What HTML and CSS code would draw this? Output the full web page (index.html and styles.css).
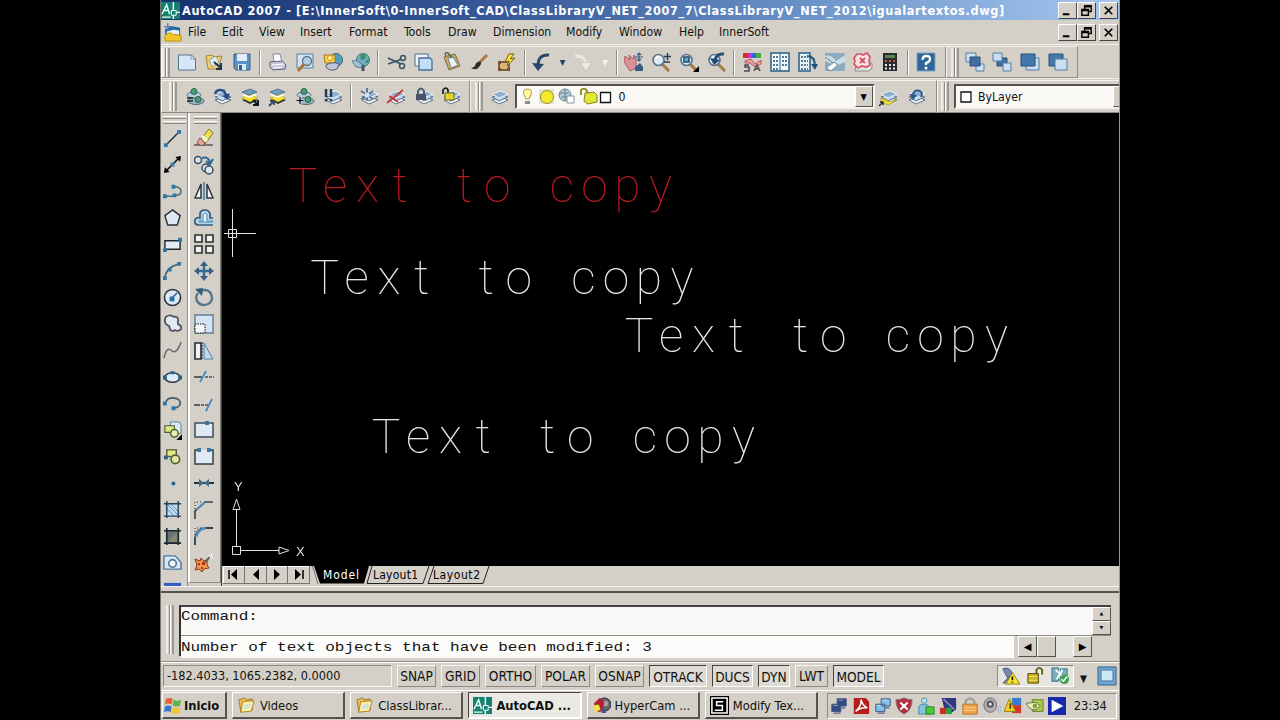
FILE: index.html
```html
<!DOCTYPE html>
<html lang="en">
<head>
<meta charset="utf-8">
<title>AutoCAD 2007</title>
<link rel="stylesheet" href="styles.css">
</head>
<body>
<svg class="defs" width="0" height="0">
  <symbol id="stack" viewBox="0 0 20 20"><path d="M3 13l9-3 7 3-9 4z" fill="#f4f8fb" stroke="#5d7488"/><path d="M3 10l9-3 7 3-9 4z" fill="#bcd4e8" stroke="#5d7488"/><path d="M3 7l9-3 7 3-9 4z" fill="#8fb1cf" stroke="#e9f1f7"/></symbol>
  <symbol id="ystack" viewBox="0 0 20 20"><path d="M2 13l8-3 8 3-8 4z" fill="#1c2b33"/><path d="M2 11l8-3 8 3-8 4z" fill="#f6e22c" stroke="#b19b14" stroke-width=".6"/><path d="M2 5l8-3 7 3-8 3z" fill="#6fa0c4" stroke="#395c7c" stroke-width=".7"/><path d="M3 8l6 2 7-2" fill="none" stroke="#fff" stroke-width="1.5"/></symbol>
  <symbol id="lens" viewBox="0 0 20 20"><path d="M11 12l7 7" stroke="#a27a45" stroke-width="3"/><circle cx="7.500" cy="8" r="5.500" fill="#dcebf5" stroke="#607687" stroke-width="1.700"/><path d="M4.500 7q1-3 4-2" stroke="#fff" fill="none" stroke-width="1.500"/></symbol>
  <symbol id="page" viewBox="0 0 20 20"><path d="M1.500 3h13l4 4v11h-17z" fill="#d6e7f5" stroke="#587590"/><path d="M14 3l4 4h-4z" fill="#f8fcff" stroke="#587590" stroke-width=".7"/></symbol>
  <symbol id="folder" viewBox="0 0 20 20"><path d="M2 4l6-2 2 2 6-1v12L4 17z" fill="#e9bd52" stroke="#9a762a"/><path d="M6 6l12-1-3 11-11 1z" fill="#fff0a6" stroke="#a98530"/><path d="M8 9l7-1-1 5-7 1z" fill="#cfe3d7"/></symbol>
  <symbol id="acad" viewBox="0 0 20 20"><path d="M0 1h20v18H0z" fill="#16806f"/><path d="M1 14L6 4l3 10M3 10h5M13 1v18M10 12h10M1 17h9" stroke="#e9fff9" stroke-width="1.500" fill="none"/><path d="M11 10h5v5h-5z" fill="#16806f" stroke="#fff"/></symbol>
  <symbol id="globes" viewBox="0 0 20 20"><ellipse cx="11" cy="14" rx="8" ry="3.500" fill="#9fb6c8" stroke="#526c80"/><ellipse cx="9" cy="8" rx="7" ry="3" fill="#b8cddd" stroke="#5f7d92"/><circle cx="9" cy="4.500" r="3" fill="#4c9c78" stroke="#28634c"/><circle cx="13" cy="12.500" r="3" fill="#4c9c78" stroke="#28634c"/></symbol>
  <symbol id="pcs" viewBox="0 0 20 20"><path d="M8 2h10v8H8zM2 8h10v8H2z" fill="currentColor" stroke="#3c4c7c"/><path d="M4 18h8M12 12h5" stroke="#76829e" stroke-width="2"/><path d="M9.500 3.500h5M3.500 9.500h5" stroke="#fff" stroke-opacity=".5"/></symbol>
</svg>
<main class="app">
  <header class="title"><svg class="i"><use href="#acad"/></svg><span class="title-text">AutoCAD 2007 - [E:\InnerSoft\0-InnerSoft_CAD\ClassLibraryV_NET_2007_7\ClassLibraryV_NET_2012\igualartextos.dwg]</span>
    <div class="winbtns"><svg viewBox="0 0 18 16"><path d="M4 12h7" stroke="#000" stroke-width="2.200"/></svg><svg viewBox="0 0 18 16"><path d="M7 6V3h7v6h-3M7 4h7M4 7h7v6H4zM4 8h7" fill="none" stroke="#000" stroke-width="1.500"/></svg><svg viewBox="0 0 18 16"><path d="M5 4l8 8M13 4l-8 8" stroke="#000" stroke-width="1.800"/></svg></div>
  </header>
  <nav class="menu"><svg class="i" viewBox="0 0 20 20"><path d="M2 7l5-4 11 2v13H3z" fill="#2367a6"/><path d="M4 9l7-2 6 1v5H4z" fill="#e9f0f7"/><path d="M2 13l5-3 4 2 8 1v6H2z" fill="#f2c529" stroke="#bd8c10"/><path d="M5 0v8M1 4h8" stroke="#6282a8" stroke-width="1.500"/></svg>
    <span class="w35">File</span><span class="w36">Edit</span><span class="w41">View</span><span class="w49">Insert</span><span class="w56">Format</span><span class="w44">Tools</span><span class="w45">Draw</span><span class="w72">Dimension</span><span class="w53">Modify</span><span class="w60">Window</span><span class="w40">Help</span><span>InnerSoft</span>
    <div class="winbtns"><svg viewBox="0 0 18 16"><path d="M4 12h7" stroke="#000" stroke-width="2.200"/></svg><svg viewBox="0 0 18 16"><path d="M7 6V3h7v6h-3M7 4h7M4 7h7v6H4zM4 8h7" fill="none" stroke="#000" stroke-width="1.500"/></svg><svg viewBox="0 0 18 16"><path d="M5 4l8 8M13 4l-8 8" stroke="#000" stroke-width="1.800"/></svg></div>
  </nav>
  <div class="toolrow">
    <section class="bar std"><i class="grip"></i>
      <b><svg><use href="#page"/></svg></b>
      <b><svg viewBox="0 0 20 20"><path d="M2 4l6-1 2 2 8-1-4 13H4z" fill="#efd170" stroke="#a38332"/><path d="M5 8l7-4 3 6-7 5z" fill="#dceaf0" stroke="#738998" stroke-width=".7"/><path d="M10 10l7 6M17 11v6h-5" stroke="#1a3656" stroke-width="2" fill="none"/></svg></b>
      <b><svg viewBox="0 0 20 20"><path d="M2 2h16v16H4l-2-2z" fill="#5c91c3" stroke="#345d87"/><path d="M5 2h10v7H5z" fill="#e2edf7"/><path d="M6 12h8v6H6z" fill="#dbe6ee"/><path d="M7 13h3v5H7z" fill="#345d87"/></svg></b><u class="s8"></u>
      <b><svg viewBox="0 0 20 20"><path d="M5 2h7l2 8H6z" fill="#fff" stroke="#8886a8"/><path d="M2 10l12-1 4 4-1 4-12 1-3-3z" fill="#c8c7dc" stroke="#626184"/><path d="M4 13l12-1M6 16l8-1" stroke="#fff"/></svg></b>
      <b><svg viewBox="0 0 20 20"><path d="M2 2h16v14H2z" fill="#cee2f2" stroke="#587d9c"/><circle cx="12" cy="9" r="4.500" fill="#b1cfe2" stroke="#577285" stroke-width="1.300"/><path d="M9 12l-6 7" stroke="#a8753c" stroke-width="3"/></svg></b>
      <b><svg viewBox="0 0 20 20"><circle cx="13" cy="8" r="6.500" fill="#579ac0" stroke="#416878"/><path d="M1 3h11v8H2z" fill="#f9ce45" stroke="#9f7522"/><circle cx="7" cy="6" r="2.500" fill="#fff49a" stroke="#d99020"/><path d="M3 13q7-4 13-1l-2 5q-7 3-11-2z" fill="#c0c6dc" stroke="#545b78"/></svg></b>
      <b><svg viewBox="0 0 20 20"><circle cx="12" cy="8" r="6.500" fill="#6cadcd" stroke="#387a73"/><path d="M9 3l6-1-1 5-4 1zM14 10l4-4-1 5z" fill="#3e9258"/><path d="M1 9q5-2 9 3l3 1-1 3-7-1z" fill="#9ec1da" stroke="#607a90"/><path d="M12 13v6" stroke="#415463" stroke-width="3"/></svg></b><u class="s8"></u>
      <b><svg viewBox="0 0 20 20"><path d="M1 6l13 6M1 12l14-5" stroke="#3b5369" stroke-width="1.700"/><circle cx="16" cy="6" r="2.500" fill="none" stroke="#3b5369" stroke-width="1.500"/><circle cx="15" cy="14" r="2.500" fill="none" stroke="#3b5369" stroke-width="1.500"/></svg></b>
      <b><svg viewBox="0 0 20 20"><path d="M1 2h13v12H1z" fill="#e8f3fb" stroke="#486e92"/><path d="M5 6h11l2 2v10H5z" fill="#c3dff5" stroke="#486e92" stroke-width="1.300"/></svg></b>
      <b><svg viewBox="0 0 20 20"><path d="M2 5l11-3 5 12-11 4z" fill="#cba866" stroke="#806838"/><path d="M6 6l5-1 5 8-7 3z" fill="#eaf4fa" stroke="#70838b"/><path d="M4 4q-2-4 2-3l4 5" fill="none" stroke="#507044" stroke-width="1.500"/></svg></b>
      <b><svg viewBox="0 0 20 20"><path d="M18 3l-8 8" stroke="#b27546" stroke-width="3"/><path d="M12 10q-5-1-6 4-2 2-4 2 6 4 10-4z" fill="#2c2928"/></svg></b>
      <b><svg viewBox="0 0 20 20"><path d="M2 10h10v8H2z" fill="#dbb775" stroke="#5b422f" stroke-width="1.500"/><path d="M12 2l-4 8 4-1-2 5 8-8-5 1 4-5z" fill="#ffe82a" stroke="#75601c"/><path d="M1 9h3v3H1zM1 16h3v3H1zM10 16h3v3h-3z" fill="#7d4d34"/></svg></b><u class="s7"></u>
      <b><svg viewBox="0 0 20 20"><path d="M18 3Q7 2 7 14" fill="none" stroke="#28466f" stroke-width="3"/><path d="M1 11l6 8 6-7z" fill="#28466f"/></svg></b><em class="drop">▾</em>
      <b><svg viewBox="0 0 20 20" opacity=".7"><path d="M2 4Q13 3 13 14" fill="none" stroke="#f5f4ee" stroke-width="3"/><path d="M7 11l6 8 6-9z" fill="#f8f7f0" stroke="#bab7ae" stroke-width=".7"/></svg></b><em class="drop off">▾</em><u class="s7"></u>
      <b><svg viewBox="0 0 20 20"><path d="M1 4l5 4-1-5 4 4 1-4 2 5v8l-6 3-4-6-2-4z" fill="#d99195" stroke="#a75d68"/><path d="M15 1v8M11 5h8M13 3l2-2 2 2M13 7l2 2 2-2" stroke="#355e83" fill="none" stroke-width="1.200"/><path d="M11 15l5-4 3 4v4h-8z" fill="#365c81"/></svg></b>
      <b><svg viewBox="0 0 20 20"><use href="#lens"/><path d="M16.500 1v7M13 4.500h7M13 10h6" stroke="#253c52" stroke-width="1.500"/></svg></b>
      <b><svg viewBox="0 0 20 20"><use href="#lens"/><path d="M5 5h5v5H5z" fill="#6ba9d2" stroke="#174970" stroke-width="1.500"/><path d="M20 14v6h-6z"/></svg></b>
      <b><svg viewBox="0 0 20 20"><use href="#lens"/><path d="M17 2Q9 1 8 9" fill="none" stroke="#254c76" stroke-width="3"/><path d="M3 6l4 7 6-5z" fill="#254c76"/></svg></b><u class="s8"></u>
      <b><svg viewBox="0 0 20 20"><path d="M1 1h5v5H1z" fill="#d92d2d"/><path d="M6 1h4v5H6z" fill="#c735cb"/><path d="M10 1h4v5h-4z" fill="#2e64df"/><path d="M14 1h5v5h-5z" fill="#41aa48"/><path d="M3 9l6-2 4 5 6-4v4l-6 3-5-4H3z" fill="#ec9fa3" stroke="#b4575d"/><path d="M7 13H3v2h4v4H2M12 19l3-6 3 6M13 17h4" stroke="#4d4a53" fill="none" stroke-width="1.500"/></svg></b>
      <b><svg viewBox="0 0 20 20"><path d="M1 1h18v18H1z" fill="#f1f8fc" stroke="#295d87" stroke-width="1.500"/><path d="M10 1v18" stroke="#295d87"/><path d="M3 5h5M3 9h5M3 13h5M3 17h5M12 5h2M15 5h2M12 9h2M15 9h2M12 13h2M15 13h2" stroke="#255377" stroke-width="1.500" stroke-dasharray="2 1"/></svg></b>
      <b><svg viewBox="0 0 20 20"><path d="M1 1h11v18H1z" fill="#e6f3fa" stroke="#295d87" stroke-width="1.500"/><path d="M3 5h7M3 9h7M3 13h7M3 17h7" stroke="#255377" stroke-width="1.500" stroke-dasharray="2 1"/><path d="M9 4q8 0 8 10" fill="none" stroke="#235379" stroke-width="2"/><path d="M13 12l4 6 3-6z" fill="#235379"/></svg></b>
      <b><svg viewBox="0 0 20 20"><path d="M0 1h20v18H0z" fill="#8dabc0"/><path d="M0 4q6-2 11 5l9-6v7l-9 4-11-5z" fill="#c7dce6"/><path d="M1 16l8-6 4 3-7 6zM0 5l8 6" fill="#f3f8f8" stroke="#6e8897"/></svg></b>
      <b><svg viewBox="0 0 20 20"><path d="M3 11h16v5l-3 3H2z" fill="#e0dfdc" stroke="#8a8a88"/><path d="M4 2h4l2 1 4-2 3 4-1 4 1 4-4 2-4-1-4 2-4-4 1-3-1-3z" fill="#f9dfe0" stroke="#d45460" stroke-width="1.700"/><path d="M7 6l5 5M12 6l-5 5" stroke="#d45460" stroke-width="1.800"/></svg></b>
      <b><svg viewBox="0 0 20 20"><path d="M3 1h14v18H3z" fill="#272b2e"/><path d="M5 3h10v3H5z" fill="#598550"/><path d="M5 9h10" stroke="#db504a" stroke-width="2" stroke-dasharray="2 2"/><path d="M5 13h10M5 16.500h10" stroke="#e7e7e5" stroke-width="2" stroke-dasharray="2 2"/></svg></b><u class="s8"></u>
      <b><svg viewBox="0 0 20 20"><path d="M1 1h18v18H1z" fill="#2d6799" stroke="#79a7c9"/><path d="M6.500 8q0-4 4-4t3.500 3.500Q13.500 10 10 11v2" fill="none" stroke="#fff" stroke-width="2.300"/><circle cx="10" cy="16" r="1.500" fill="#fff"/></svg></b>
    </section>
    <section class="bar order"><i class="grip"></i>
      <b><svg viewBox="0 0 20 20"><path d="M1 1h10v9H1zM11 12h8v7h-8z" fill="#cfe0ee" stroke="#537da2"/><path d="M5 5h10v9H5z" fill="#3f70a2" stroke="#294e75"/></svg></b>
      <b><svg viewBox="0 0 20 20"><path d="M5 6h10v8H5z" fill="#3f70a2" stroke="#294e75"/><path d="M1 1h9v8H1zM11 11h8v8h-8z" fill="#c9dfef" stroke="#537da2"/></svg></b>
      <b><svg viewBox="0 0 20 20"><path d="M6 6h13v12H6z" fill="#c9dfef" stroke="#537da2"/><path d="M1 2h14v12H1z" fill="#4478aa" stroke="#294e75"/></svg></b>
      <b><svg viewBox="0 0 20 20"><path d="M1 2h14v12H1z" fill="#4478aa" stroke="#294e75"/><path d="M7 7h12v11H7z" fill="#c9dfef" stroke="#537da2"/></svg></b>
    </section>
  </div>
  <div class="toolrow second">
    <section class="bar lay"><i class="grip"></i>
      <b><svg viewBox="0 0 20 20"><use href="#globes"/><path d="M2 11h6M2 14h6" stroke="#161f25" stroke-width="1.500"/></svg></b>
      <b><svg viewBox="0 0 20 20"><use href="#stack"/><path d="M3 7q2-6 9-3l3 6" fill="none" stroke="#294e82" stroke-width="2.500"/><path d="M10 9l6 4 2-7z" fill="#294e82"/></svg></b>
      <b><svg viewBox="0 0 20 20"><use href="#ystack"/><path d="M13 13l5 5M18 13v5h-5" stroke="#101820" stroke-width="2" fill="none"/></svg></b>
      <b><svg viewBox="0 0 20 20"><use href="#ystack"/><path d="M1 19l5-5M2 14h4v4" stroke="#344a64" stroke-width="1.800" fill="none"/></svg></b>
      <b><svg viewBox="0 0 20 20"><use href="#globes"/><path d="M5 10v7M1.500 13.500h7" stroke="#fff" stroke-width="3"/><path d="M5 10v7M1.500 13.500h7" stroke="#151b1d" stroke-width="1.400"/></svg></b>
      <b><svg viewBox="0 0 20 20"><use href="#stack"/><path d="M3 2v8M8 2v8" stroke="#263d51" stroke-width="2.500"/><path d="M3 12v2.500M8 12v2.500" stroke="#263d51" stroke-width="2.500"/></svg></b><u class="s8"></u>
      <b><svg viewBox="0 0 20 20"><use href="#stack"/><path d="M8 1v13M2 4l12 8M2 12l12-8" stroke="#65759b" stroke-width="2"/><circle cx="8" cy="8" r="2.500" fill="#d9e3f4"/></svg></b>
      <b><svg viewBox="0 0 20 20"><use href="#stack"/><path d="M1 16L17 3M4 9l8 6" stroke="#c73b39" stroke-width="2"/></svg></b>
      <b><svg viewBox="0 0 20 20"><use href="#stack"/><path d="M4 8V4q3-5 6 0v4" stroke="#56606d" fill="none" stroke-width="2"/><path d="M2 7h10v6H2z" fill="#4b5364"/></svg></b>
      <b><svg viewBox="0 0 20 20"><use href="#stack"/><path d="M2 7V3q3-4 5 0v4" stroke="#1f1e10" fill="none" stroke-width="1.700"/><path d="M4 6h9v7H4z" fill="#e3d72d" stroke="#6d640c"/></svg></b>
    </section>
    <section class="bar layers"><i class="grip"></i>
      <b><svg><use href="#stack"/></svg></b>
      <div class="combo layer-combo"><svg viewBox="518 86 96 20"><path d="M525 94q-2-6 3.500-6t3.500 6l-2 4h-3z" fill="#fff8a0" stroke="#a6964e"/><path d="M526 100h5v3h-5z" fill="#8d8d84"/><path d="M540 88h15v15h-15z" fill="#e3e5c8"/><circle cx="548" cy="96" r="6.500" fill="#f3eb27" stroke="#90904a"/><circle cx="566" cy="94" r="6" fill="#b5cbd3" stroke="#638290"/><path d="M561 92h9M562 96h8M566 88v12" stroke="#678691"/><path d="M568 95h7v7h-7z" fill="#fff" stroke="#8392a0"/><path d="M582 94v-5q4-3 6 1v6" stroke="#919127" stroke-width="2" fill="none"/><path d="M586 92l9-1 3 3v7l-9 2-4-3z" fill="#e2e635" stroke="#7d8225"/><path d="M601.500 91.500h10v10h-10z" fill="#fff" stroke="#111" stroke-width="1.300"/></svg><span>0</span><button class="arrow">▼</button></div>
      <b><svg viewBox="0 0 20 20"><use href="#stack"/><path d="M3 11l9 4 7-3-8 6-8-3z" fill="#f3df38" stroke="#aa981e" stroke-width=".7"/><path d="M1 19l4-4M2 15h3v3" stroke="#26313b" stroke-width="1.500" fill="none"/></svg></b>
      <b><svg viewBox="0 0 20 20"><use href="#stack"/><path d="M7 9q0-7 7-5 3 2 1 6" fill="none" stroke="#2b5787" stroke-width="2"/><path d="M3 7l4 6 4-5z" fill="#2b5787"/></svg></b>
    </section>
    <section class="bar props"><i class="grip"></i>
      <div class="combo color-combo"><svg viewBox="0 0 12 12"><path d="M1 1h10v10H1z" fill="#fff" stroke="#111" stroke-width="1.300"/></svg><span>ByLayer</span><button class="arrow">▼</button></div>
    </section>
  </div>

  <div class="work">
    <aside class="tools"><i class="hgrip"></i>
      <svg viewBox="0 0 20 20"><path d="M3 17L17 3" stroke="#1d3443" stroke-width="1.500"/><path d="M1 15h4v4H1zM15 1h4v4h-4z" fill="#2f79ae"/></svg>
      <svg viewBox="0 0 20 20"><path d="M3 17L17 3" stroke="#1b2328" stroke-width="1.700"/><path d="M1 19l1-6 5 5zM19 1l-1 6-5-5z"/><path d="M8 8h4v4H8z" fill="#347cac"/></svg>
      <svg viewBox="0 0 20 20"><path d="M2 15h10M11 5h3q5 1 5 5t-6 4" fill="none" stroke="#4f6978" stroke-width="1.600"/><path d="M0 13h4v4H0zM10 12h4v4h-4zM9 3h4v4H9z" fill="#2b78ad"/></svg>
      <svg viewBox="0 0 20 20"><path d="M10 2l8 6-3 10H5L2 8z" fill="#dfe9f4" stroke="#28353e" stroke-width="1.600"/></svg>
      <svg viewBox="0 0 20 20"><path d="M2 6h16v9H2z" fill="#e5ecf5" stroke="#20272c" stroke-width="1.500"/><path d="M0 14h4v4H0zM16 3h4v4h-4z" fill="#2b78ad"/></svg>
      <svg viewBox="0 0 20 20"><path d="M2 18Q3 6 18 3" fill="none" stroke="#476477" stroke-width="1.700"/><path d="M0 16h4v4H0zM5 7h4v4H5zM15 1h4v4h-4z" fill="#2b78ad"/></svg>
      <svg viewBox="0 0 20 20"><circle cx="10" cy="10" r="8.500" fill="#dce8f3" stroke="#26323a" stroke-width="1.600"/><path d="M9 11l6-6" stroke="#275f8a" stroke-width="1.500"/><path d="M7 9h5v5H7z" fill="#286fa2"/></svg>
      <svg viewBox="0 0 20 20"><path d="M3 3q5-3 8 0 5-1 5 4-1 2 0 4 4 1 3 5-3 3-6 1-5 2-6-2 0-3-2-3-5-3-2-9z" fill="#e4eaf3" stroke="#49545e" stroke-width="1.800"/></svg>
      <svg viewBox="0 0 20 20"><path d="M1 18Q4 5 9 10t10-9" fill="none" stroke="#656c70" stroke-width="1.600"/></svg>
      <svg viewBox="0 0 20 20"><ellipse cx="10" cy="10" rx="8" ry="5" fill="#e0eaf3" stroke="#2a3c49" stroke-width="1.700"/><path d="M0 8h4v4H0zM8 3.500h4v3H8zM16 8h4v4h-4z" fill="#26628d"/></svg>
      <svg viewBox="0 0 20 20"><path d="M3 9q1-5 8-5 8 1 7 7-2 4-8 4" fill="none" stroke="#49606d" stroke-width="1.800"/><path d="M0 8h4v4H0zM9 13h4v4H9z" fill="#2b78ad"/></svg>
      <svg viewBox="0 0 20 20"><path d="M8 1h9l2 3v9H8z" fill="#dceaf4" stroke="#5f7b90"/><path d="M2 5h10v7H2z" fill="#ddec7f" stroke="#485a36" stroke-width="1.200"/><circle cx="12" cy="13" r="4" fill="#e7f0ab" stroke="#4f633e" stroke-width="1.600"/><path d="M20 14v6h-6z"/></svg>
      <svg viewBox="0 0 20 20"><path d="M4 3h10v7H4z" fill="#e7e884" stroke="#535b33" stroke-width="1.500"/><circle cx="13" cy="13" r="4.500" fill="#dfe8a5" stroke="#52623e" stroke-width="1.700"/><path d="M1 9h4v4H1z" fill="#28618a"/></svg>
      <svg viewBox="0 0 20 20"><circle cx="11" cy="10" r="2" fill="#1e6293"/></svg>
      <svg viewBox="0 0 20 20"><path d="M3 4h14v13H3z" fill="#c3def1"/><path d="M3 8l9 9M4 4l13 13M8 4l9 9" stroke="#548eb9"/><path d="M4 1v18M16 1v18M1 4h18M1 17h18" stroke="#274158" stroke-width="1.500"/></svg>
      <svg viewBox="0 0 20 20"><path d="M3 4h14v13H3z" fill="#6b7475"/><path d="M5 15l11-10v11z" fill="#86876d"/><path d="M4 1v18M16 1v18M1 4h18M1 17h18" stroke="#1c2a32" stroke-width="1.700"/></svg>
      <svg viewBox="0 0 20 20"><path d="M1 3h12l6 7v7H1z" fill="#d7e8f5" stroke="#527896" stroke-width="1.500"/><circle cx="10" cy="11" r="4" fill="#edf6fc" stroke="#527896" stroke-width="1.700"/></svg>
      <svg viewBox="0 0 20 20"><path d="M1 3h18v16H1z" fill="#eff4fc"/><path d="M1 3h18v4H1z" fill="#355ec1"/><path d="M2 9h16" stroke="#547bcd" stroke-width="3" stroke-dasharray="4 2"/></svg>
    </aside>
    <aside class="tools edit"><i class="hgrip"></i>
      <svg viewBox="0 0 20 20"><path d="M0 17h19" stroke="#454545" stroke-width="1.300"/><path d="M6 12L15 1l4 4-8 11z" fill="#efdf4d" stroke="#75702f"/><path d="M6 10l5 5-3 3-5-3z" fill="#e6a4a0" stroke="#7c5451"/><path d="M8 8l5 5" stroke="#eef4f8" stroke-width="3"/></svg>
      <svg viewBox="0 0 20 20"><g fill="#dbe3ed" stroke="#3a4e5c" stroke-width="1.500"><circle cx="4" cy="5" r="3.500"/><circle cx="12" cy="13" r="4"/><circle cx="15" cy="15" r="4"/></g><path d="M8 3q7-2 8 5M12 6l4 3 3-5" stroke="#2e6995" fill="none" stroke-width="2"/></svg>
      <svg viewBox="0 0 20 20"><path d="M7 3v14H1zM13 3v14h6z" fill="#eff3f7" stroke="#2d373e" stroke-width="1.500"/><path d="M10 1v18" stroke="#367db1" stroke-width="1.500"/></svg>
      <svg viewBox="0 0 20 20"><path d="M19 17H4Q0 16 1 12q1-3 5-2V6q0-4 5-4 4 0 5 4v4h3" fill="#b9d7ed" stroke="#365b77" stroke-width="1.700"/><path d="M19 14H5q-1-2 4-1V7q3-4 4 0v6h6" fill="#e5f1fa" stroke="#4387b8"/></svg>
      <svg viewBox="0 0 20 20"><path d="M1 1h7v7H1zM12 1h7v7h-7zM1 12h7v7H1zM12 12h7v7h-7z" fill="#eff1f4" stroke="#2b2e30" stroke-width="1.600"/></svg>
      <svg viewBox="0 0 20 20"><path d="M10 3v14M3 10h14" stroke="#396b91" stroke-width="2.500"/><path d="M10 0l4 5H6zM10 20l4-5H6zM0 10l5-4v8zM20 10l-5-4v8z" fill="#356285"/></svg>
      <svg viewBox="0 0 20 20"><path d="M6 4q8-3 11 3 3 7-3 10-7 3-11-3-2-4 1-8" fill="none" stroke="#53768d" stroke-width="2.300"/><path d="M1 2l8-1-1 8z" fill="#315d7c"/></svg>
      <svg viewBox="0 0 20 20"><path d="M1 1h18v18H1z" fill="#d6e4f1" stroke="#5e7f99" stroke-width="1.400"/><path d="M1 10h10v9H1z" fill="#f7f8fa" stroke="#111" stroke-dasharray="1.500 1"/></svg>
      <svg viewBox="0 0 20 20"><path d="M1 2h6v16H1z" fill="#eef2f6" stroke="#222b31" stroke-width="1.600"/><path d="M10 2l9 16h-9z" fill="#bcd8ef" stroke="#56819f"/><path d="M8 1v18" stroke="#222" stroke-dasharray="2 1"/></svg>
      <svg viewBox="0 0 20 20"><path d="M0 10h8" stroke="#313d44" stroke-width="1.500"/><path d="M11 10h9" stroke="#3a525f" stroke-width="1.500" stroke-dasharray="3 1"/><path d="M6 15l6-11" stroke="#438bc1" stroke-width="1.800"/></svg>
      <svg viewBox="0 0 20 20"><path d="M0 11h6" stroke="#313d44" stroke-width="1.500"/><path d="M7 11h7" stroke="#3a525f" stroke-width="1.500" stroke-dasharray="3 1"/><path d="M12 17l6-12" stroke="#438bc1" stroke-width="1.800"/></svg>
      <svg viewBox="0 0 20 20"><path d="M1 3h18v14H1z" fill="#e0e9f4" stroke="#3c4d59" stroke-width="1.500"/><path d="M11 1h4v4h-4z" fill="#3b789f"/></svg>
      <svg viewBox="0 0 20 20"><path d="M5 3H1v14h18V3h-4" fill="#e0e9f4" stroke="#303d46" stroke-width="1.500"/><path d="M3 1h4v4H3zM13 1h4v4h-4z" fill="#3b789f"/></svg>
      <svg viewBox="0 0 20 20"><path d="M0 10h20" stroke="#24343f" stroke-width="2"/><path d="M5 6l5 4-5 4zM15 6l-5 4 5 4z" fill="#41708d"/></svg>
      <svg viewBox="0 0 20 20"><path d="M1 19v-8l10-9h8" fill="none" stroke="#3a454c" stroke-width="1.700"/><path d="M2 10l9-8" stroke="#508fbd" stroke-width="2"/><path d="M1 9V2h8" fill="none" stroke="#222" stroke-dasharray="1 2"/></svg>
      <svg viewBox="0 0 20 20"><path d="M1 19v-7q1-9 10-10h8" fill="none" stroke="#303f4a" stroke-width="1.800"/><path d="M2 11q2-8 10-9" fill="none" stroke="#508fbd" stroke-width="2.500"/><path d="M1 9V2h8" fill="none" stroke="#222" stroke-dasharray="1 2"/></svg>
      <svg viewBox="0 0 20 20"><path d="M1 6l5 2 1-3 3 3 3-1v5l2 3-5 1-2 3-3-3-4 1 2-5z" fill="#e79944" stroke="#8d3320"/><path d="M11 9l5-5" stroke="#5a5550" stroke-width="1.800"/><path d="M4 10h2v2H4zM8 9h3v3H8zM7 14h2v2H7z" fill="#c72a20"/><path d="M14 2l5 3M18 0l-2 6" stroke="#f7fafa"/></svg>
    </aside>
    <section class="viewer">
      <svg class="drawing" viewBox="222 113 897 453">
        <g class="entity">
          <text class="red" y="201.500" x="303 335 367.400 400 432 464.600 497.300 530 562 594.500 627.500 660.500">Text to copy</text>
          <text transform="translate(21.500 93)" y="201" x="303 335 367.400 400 432 464.600 497.300 530 562 594.500 627.500 660.500">Text to copy</text>
          <text transform="translate(336 151)" y="201" x="303 335 367.400 400 432 464.600 497.300 530 562 594.500 627.500 660.500">Text to copy</text>
          <text transform="translate(83 252)" y="201" x="303 335 367.400 400 432 464.600 497.300 530 562 594.500 627.500 660.500">Text to copy</text>
        </g>
        <g fill="none" stroke="#e2e2e2"><path d="M232.500 209v48M224 233.500h32M228.500 229.500h8v8h-8z"/><path d="M236.500 546v-36M241 550.500h38M232.500 546.500h8v8h-8zM236.500 499l-3.500 10.500h7zM289 550.500l-10-3.500v7z"/></g>
        <text class="axis" x="234" y="491">Y</text><text class="axis" x="296" y="556">X</text>
      </svg>
      <svg class="tabs" viewBox="222 566 897 18"><g fill="#d4d0c8" stroke="#fff"><path d="M223.500 566.500h21v17h-21zM244.500 566.500h22v17h-22zM266.500 566.500h21v17h-21zM287.500 566.500h22v17h-22z"/></g><path d="M223 583.500h87M244.500 566v18M266.500 566v18M287.500 566v18M309.500 566v18" stroke="#77756f"/><path d="M229 570v9M303 570v9" stroke="#000" stroke-width="1.500"/><path d="M237 569v11l-6-5.500zM259 569v11l-6-5.500zM274 569v11l6-5.500zM295 569v11l6-5.500z"/><path d="M314 566l6 17.500h44l5-17.500z"/><path d="M312.500 566l5.500 18" stroke="#77756f"/><g fill="#d4d0c8" stroke="#222"><path d="M372 566l-5 17.500h56l6-17.500M434 566l-6 17.500h55l6-17.500"/></g><text x="323" y="579" fill="#fff" textLength="36">Model</text><text x="373" y="579" textLength="45">Layout1</text><text x="433" y="579" textLength="47">Layout2</text></svg>
    </section>
  </div>
  <section class="command"><i class="grip"></i>
    <div class="console"><div class="history"><span>Command:</span><div class="vscroll"><button>▴</button><button>▾</button></div></div>
      <div class="prompt"><span>Number of text objects that have been modified: 3</span><div class="hscroll"><button>◀</button><button></button><i></i><button>▶</button></div></div></div>
  </section>
  <footer class="status"><span class="coords">-182.4033, 1065.2382, 0.0000</span><span class="t39">SNAP</span><span class="t39">GRID</span><span class="t51">ORTHO</span><span class="t48">POLAR</span><span class="t48">OSNAP</span><span class="on t58">OTRACK</span><span class="on t41">DUCS</span><span class="on t33">DYN</span><span class="t34">LWT</span><span class="on t51">MODEL</span>
    <div class="stray"><svg viewBox="0 0 20 20"><path d="M2 3q7-3 10 5l-5 5zM2 18l6-6 4 5z" fill="#7888b1" stroke="#46577b"/><path d="M12 7l8 12H5z" fill="#f7e628" stroke="#93820e"/><path d="M12 11v4M12 16.500v1" stroke="#111" stroke-width="1.700"/></svg><svg viewBox="0 0 20 20"><path d="M11 9V4q3-4 6 0v5" fill="none" stroke="#6a6119" stroke-width="2"/><path d="M2 8h11v10H2z" fill="#c9b323" stroke="#4f450a"/><path d="M3 11h9M3 15h9" stroke="#f3e77a"/></svg><svg viewBox="0 0 20 20"><path d="M1 2h7v14H1zM10 3h7v12h-7z" fill="#7cafbd" stroke="#396f82"/><path d="M5 4l8 8M12 4L6 14" stroke="#fff" stroke-width="2"/><circle cx="14" cy="14" r="5" fill="#3fa55b"/><path d="M11 14l2 2 4-5" stroke="#fff" fill="none" stroke-width="1.500"/></svg></div><em>▼</em><svg class="clean" viewBox="0 0 20 20"><path d="M1 1h18v18H1z" fill="#73a7d1" stroke="#315e87"/><path d="M4 4h12v11H4z" fill="#cce6f8" stroke="#41749d"/></svg>
  </footer>
  <footer class="taskbar">
    <div class="task start"><svg viewBox="0 0 20 20"><path d="M2 3q4-2 7 0L8 9Q4 7 1 9z" fill="#e8612e"/><path d="M10 4q4 2 8 0l-1 6q-4 2-8 0z" fill="#65b344"/><path d="M1 11q3-2 7 0l-1 6q-3-2-7 0z" fill="#3d75d1"/><path d="M9 12q4 2 8 0l-1 6q-4 2-8 0z" fill="#f1c72c"/></svg><strong>Inicio</strong></div>
    <div class="task"><svg><use href="#folder"/></svg><span>Videos</span></div><div class="task"><svg><use href="#folder"/></svg><span>ClassLibrar...</span></div><div class="task active"><svg><use href="#acad"/></svg><strong>AutoCAD ...</strong></div>
    <div class="task"><svg viewBox="0 0 20 20"><circle cx="13" cy="9" r="7" fill="#62646c" stroke="#282a31"/><circle cx="14" cy="8" r="3" fill="#a99ca5"/><path d="M2 8l6-6 5 4-2 10-6 1z" fill="#b51e2f"/><path d="M1 10l6-1 2 5-5 4z" fill="#efe34a"/><path d="M11 11l4 7h-5z" fill="#454d93"/></svg><span>HyperCam ...</span></div>
    <div class="task"><svg viewBox="0 0 20 20"><path d="M0 0h20v20H0z"/><path d="M2 2h16v16H2zM14 6H7v4h6v5H5" fill="none" stroke="#fff" stroke-width="1.600"/></svg><span>Modify Tex...</span></div>
    <div class="tray">
      <svg class="dk"><use href="#pcs"/></svg>
      <svg viewBox="0 0 20 20"><path d="M2 1h13l4 4v14H2z" fill="#b71d1b"/><path d="M4 16Q11 10 10 3q2 7 7 9Q9 11 4 16z" fill="none" stroke="#fff" stroke-width="1.700"/></svg>
      <svg class="lt"><use href="#pcs"/></svg>
      <svg viewBox="0 0 20 20"><path d="M10 1q4 2 9 2 0 12-9 16Q1 15 1 3q5 0 9-2z" fill="#b52b40" stroke="#7c7b83"/><path d="M6 6l8 8M14 6l-8 8" stroke="#fff" stroke-width="2.300"/></svg>
      <svg viewBox="0 0 20 20"><circle cx="8" cy="4" r="3" fill="#b8e1ef" stroke="#4b91ac"/><path d="M2 19V12q0-4 6-4t6 6v5z" fill="#82c2de" stroke="#4287a4"/><path d="M10 11h9v8h-9z" fill="#4bcb31" stroke="#277c17"/></svg>
      <svg viewBox="0 0 20 20"><path d="M3 1h16v13l-6 4-7-4z" fill="#30377e"/><path d="M5 2l12 12" stroke="#8488b5" stroke-width="2"/><path d="M1 12h7v7H1z" fill="#cb2d27"/><path d="M8 12h6v7H8z" fill="#2c9e3a"/></svg>
      <svg viewBox="0 0 20 20"><path d="M5 9V5q5-7 10 0v4" fill="none" stroke="#a2a09b" stroke-width="2.500"/><path d="M2 8h16v11H2z" fill="#f0a249" stroke="#b86f25"/><path d="M3 12h14M3 15h14" stroke="#ffd18d"/></svg>
      <svg viewBox="0 0 20 20"><ellipse cx="8" cy="9" rx="7" ry="8" fill="#b4b4b8" stroke="#606068"/><circle cx="8" cy="8" r="4" fill="#55555e"/><circle cx="8" cy="8" r="1.800" fill="#d6d6dd"/><path d="M16 11q3 3 0 6M18 9q4 5 0 9" fill="none" stroke="#9bb1cc"/></svg>
      <svg viewBox="0 0 20 20"><path d="M9 1h10v8H9z" fill="#357bce"/><path d="M9 9h10v9H9z" fill="#d1382d"/><path d="M6 2l7 14H0z" fill="#f6d424" stroke="#97740b"/><path d="M7 7v6" stroke="#4b4011" stroke-width="2"/></svg>
      <svg viewBox="0 0 20 20"><path d="M7 3h12v13H7z" fill="#a8c950" stroke="#627b20"/><path d="M0 7l11-1 5 4-5 4Q4 15 0 7z" fill="#e7efb7" stroke="#606b30"/><circle cx="10" cy="10" r="2.500" fill="#829d35"/></svg>
      <svg viewBox="0 0 20 20"><path d="M0 0h20v20H0z" fill="#1728aa"/><path d="M4 3l13 7-13 7z" fill="#fff"/></svg>
      <time>23:34</time>
    </div>
  </footer>
</main>
</body>
</html>
```

FILE: styles.css
```css
* { box-sizing: border-box; }
body { margin: 0; background: #000; overflow: hidden; }
.defs { position: absolute; }
.app { width: 960px; height: 720px; margin-left: 160px; background: #d4d0c8; display: flex; flex-direction: column; overflow: hidden; font: 12.200px "DejaVu Sans Condensed", "DejaVu Sans", sans-serif; font-stretch: condensed; color: #111; white-space: nowrap; border-left: 1px solid #77756f; border-right: 1px solid #999; }
svg { display: block; flex: none; }
i, em { font-style: normal; }
button { font: inherit; padding: 0; margin: 0; background: #d4d0c8; border: 1px solid; border-color: #fff #55534e #55534e #fff; display: flex; align-items: center; justify-content: center; color: #000; }

.title { height: 20px; flex: none; display: flex; align-items: center; background: linear-gradient(90deg, #16336f 0%, #3c5f9f 40%, #7098cc 70%, #a5c6ef 100%); color: #fff; }
.i { width: 19px; height: 19px; }
.title-text { font-weight: bold; font-size: 12.600px; letter-spacing: .63px; margin-left: 2px; width: 824px; }
.winbtns { margin-left: auto; display: flex; }
.winbtns svg { width: 19px; height: 17px; background: #d4d0c8; border: 1px solid; border-color: #fff #444 #444 #fff; }
.winbtns svg:last-child { margin: 0 1px 0 3px; }
.menu { height: 24px; flex: none; display: flex; align-items: center; font-size: 12.200px; }
.menu .i { margin: 0 6px 0 2px; }
.w35 { width: 34px; } .w36 { width: 37px; } .w41 { width: 41px; } .w49 { width: 49px; } .w56 { width: 55px; } .w44 { width: 44px; } .w45 { width: 45px; } .w72 { width: 73px; } .w53 { width: 53px; } .w60 { width: 60px; } .w40 { width: 40px; }

.toolrow { height: 34px; flex: none; display: flex; border-top: 1px solid #f2f1ec; padding-top: 1px; }
.toolrow.second { height: 35px; }
.bar { display: flex; align-items: center; flex: none; border: 1px solid; border-color: #f5f4f0 #8e8b84 #8e8b84 #f5f4f0; }
.grip { flex: none; width: 8px; height: 29px; border: 2px outset #eeece6; border-width: 0 2px; background: linear-gradient(90deg, #d4d0c8 1px, #8e8b84 1px, #8e8b84 2px, #fff 2px, #fff 3px, #d4d0c8 3px); }
.bar b { flex: none; width: 27.600px; display: flex; justify-content: center; }
.bar b svg { width: 20px; height: 20px; }
.bar u { flex: none; height: 25px; background: linear-gradient(90deg, transparent 3px, #8e8b84 3px, #8e8b84 4px, #fff 4px, #fff 5px, transparent 5px); }
.s8 { width: 8.300px; } .s7 { width: 6.800px; }
.drop { width: 14.500px; text-align: center; font-size: 12px; color: #233c70; }
.drop.off { color: #f5f4ee; width: 16px; }
.std { width: 785px; }
.std .grip { margin-right: 3px; }
.order { width: 132px; padding-left: 4px; }
.order .grip { margin-right: 2px; }
.lay { width: 309px; }
.lay .grip { margin: 0 4px 0 7px; }
.layers { width: 467px; }
.layers .grip { margin: 0 4px; }
.layers > b:nth-child(2) { margin-left: -2px; margin-right: 2px; }
.props { width: 184px; border-right: 0; }
.props .grip { margin: 0 5px 0 3px; }
.combo { height: 25px; flex: none; display: flex; align-items: center; background: #faf9f6; border: 2px solid; border-color: #55534e #f3f1ec #f3f1ec #55534e; overflow: hidden; }
.layer-combo { width: 360px; }
.layer-combo svg { width: 96px; height: 20px; }
.combo span { margin-left: 6px; }
.combo .arrow { margin-left: auto; width: 18px; height: 21px; font-size: 9px; }
.color-combo { width: 179px; }
.color-combo svg { width: 12px; height: 12px; margin-left: 4px; }

.work { height: 474px; flex: none; display: flex; overflow: hidden; border-bottom: 1px solid #f4f3ef; }
.tools { width: 27px; flex: none; display: flex; flex-direction: column; align-items: center; padding-top: 3px; border-right: 1px solid #8e8b84; }
.tools svg { width: 19px; height: 19px; margin: 3.780px 0; margin-right: 3px; }
.edit { width: 33px; height: 470px; border-left: 2px solid #fff; border-right: 1px solid #77756f; border-bottom: 1px solid #8e8b84; }
.edit svg { width: 20px; height: 20px; margin: 3.280px 3px 3.280px 0; }
.hgrip { flex: none; width: 23px; height: 8px; margin-bottom: 1px; border-top: 1px solid #fff; background: linear-gradient(#d4d0c8 1px, #8e8b84 1px, #8e8b84 2px, #d4d0c8 2px, #d4d0c8 4px, #fff 4px, #fff 5px, #d4d0c8 5px, #d4d0c8 6px, #8e8b84 6px); }
.viewer { width: 898px; flex: none; border-left: 1px solid #444; }
.drawing { width: 897px; height: 453px; background: #000; }
.entity { opacity: .95; }
.entity text { font: 100 48px Roboto, "Lato", sans-serif; text-anchor: middle; fill: #f4f4f4; }
.entity .red { fill: #c51c24; }
.axis { font: 13px "Liberation Sans", sans-serif; fill: #ddd; }
.tabs { width: 897px; height: 18px; font-size: 12px; }

.command { height: 71px; flex: none; display: flex; margin-top: 4px; border-top: 2px solid #55534e; padding: 12px 8px 0 5px; border-bottom: 1px solid #8e8b84; }
.command .grip { height: 49px; margin-right: 5px; }
.console { flex: 1; font: 13px "Liberation Mono", monospace; border-left: 2px solid #333; border-top: 2px solid #444; height: 51px; }
.history, .prompt { display: flex; justify-content: space-between; background: #f8f8f6; }
.history { height: 29px; border-bottom: 1px solid #8e8b84; line-height: 20px; }
.prompt { height: 22px; line-height: 23px; background: #fcfcfb; }
.console span { transform: scaleX(1.232); transform-origin: left; }
.vscroll { width: 19px; }
.vscroll button { width: 19px; height: 14px; font-size: 9px; line-height: 10px; }
.hscroll { width: 97px; background: #d4d0c8; padding-left: 4px; display: flex; }
.hscroll button { width: 19px; height: 21px; font: 10px "DejaVu Sans", sans-serif; }
.hscroll i { width: 17px; background: #e6e4de; }

.status { height: 26px; flex: none; border-top: 1px solid #fff; display: flex; align-items: center; padding-left: 2px; font-size: 13.600px; }
.status span { height: 22px; line-height: 20px; margin-right: 5px; text-align: center; border: 1px solid; border-color: #f8f7f2 #8e8b84 #8e8b84 #f8f7f2; flex: none; }
.status .coords { width: 229px; text-align: left; padding-left: 3px; font-size: 12.600px; border-color: #8e8b84 #f8f7f2 #f8f7f2 #8e8b84; }
.status .on { border-color: #444 #fff #fff #444; padding-top: 1px; background: #dedbd4; }
.status .t39 { width: 39px; } .t51 { width: 51px; } .t48 { width: 49px; } .t58 { width: 58px; } .t41 { width: 41px; } .t33 { width: 32px; } .t34 { width: 33px; }
.stray { margin-left: auto; width: 77px; height: 22px; display: flex; justify-content: space-around; align-items: center; border: 1px solid; border-color: #8e8b84 #fff #fff #8e8b84; background: #e7e5df; }
.stray svg { width: 19px; height: 19px; }
.status em { font-size: 10px; margin: 5px 10px 0 6px; }
.clean { width: 20px; height: 20px; margin-right: 2px; }
.taskbar { height: 30px; flex: none; display: flex; align-items: center; gap: 5px; border-top: 1px solid #fff; padding-left: 1px; margin-top: 2px; font-size: 12.800px; }
.task { width: 113.200px; height: 27px; flex: none; display: flex; align-items: center; padding-left: 4px; gap: 4px; border: 1px solid; border-color: #fff #55534e #55534e #fff; border-right-width: 2px; border-bottom-width: 2px; }
.task svg { width: 19px; height: 19px; }
.task.start { width: 65px; padding-left: 1px; gap: 1px; }
.task.active { border-color: #444 #fff #fff #444; background: #ebe9e4; }
.tray { width: 290px; height: 26px; margin-left: 4px; display: flex; align-items: center; gap: 3.800px; padding-left: 2px; border: 1px solid; border-color: #8e8b84 #fff #fff #8e8b84; }
.tray svg { width: 18px; height: 18px; }
.dk { color: #364a84; } .lt { color: #82c4e8; }
.tray time { margin-left: 4px; }
```
